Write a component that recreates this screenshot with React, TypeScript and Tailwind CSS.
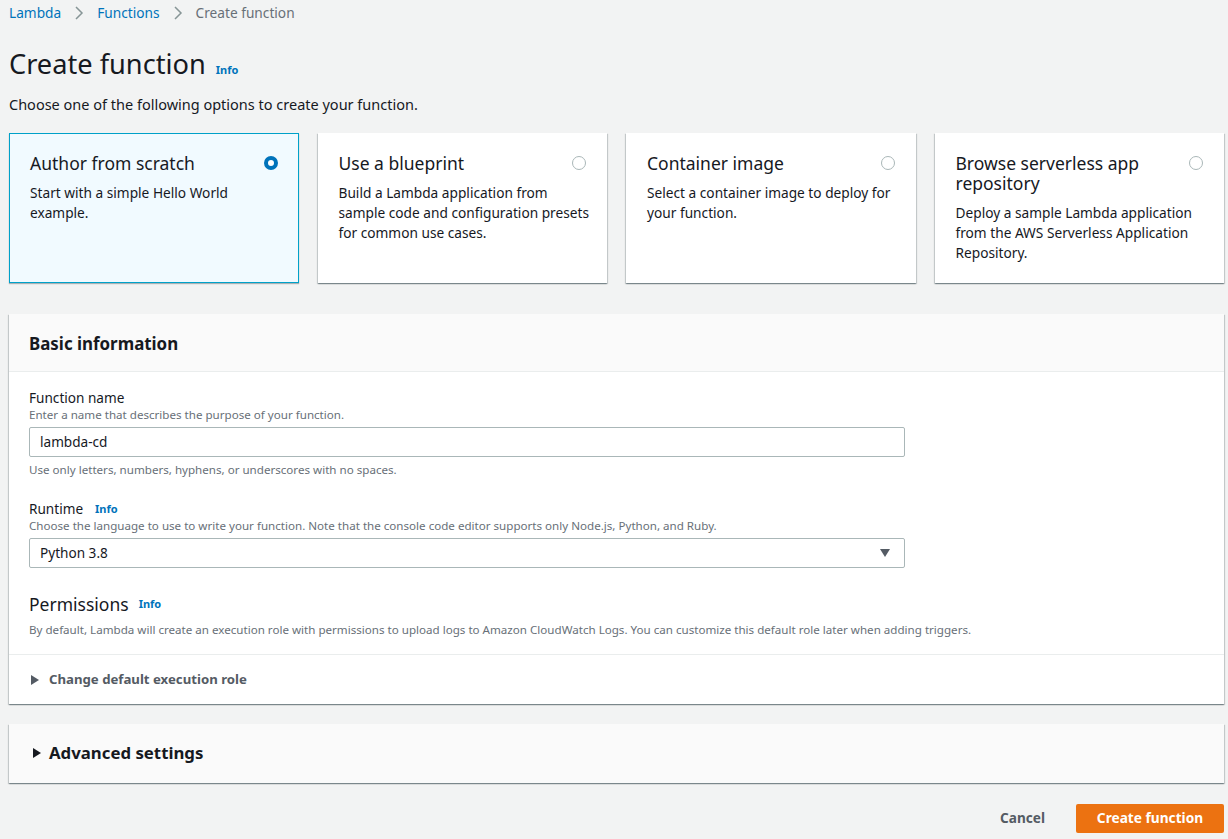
import React from "react";

const font = { fontFamily: '"Noto Sans", "Open Sans", Arial, sans-serif' };

const shadow =
  "shadow-[0_1px_1px_0_rgba(0,28,36,0.3),1px_1px_1px_0_rgba(0,28,36,0.15),-1px_1px_1px_0_rgba(0,28,36,0.15)]";

function Card({ title, desc, selected }: { title: React.ReactNode; desc: string; selected?: boolean }) {
  return (
    <div
      className={
        "flex-1 h-[150px] px-5 pt-[19px] " +
        (selected
          ? "bg-[#f1faff] border border-[#00a1c9] shadow-[0_1px_1px_rgba(0,28,36,0.3)]"
          : "bg-white border border-transparent " + shadow)
      }
    >
      <div className="flex justify-between items-start">
        <div className="text-[17.5px] leading-[20px] text-[#16191f]">{title}</div>
        {selected ? (
          <div className="w-[14px] h-[14px] rounded-full border-[4px] border-[#0073bb] bg-white mt-[3px] shrink-0" />
        ) : (
          <div className="w-[14px] h-[14px] rounded-full border border-[#aab7b8] bg-white mt-[3px] shrink-0" />
        )}
      </div>
      <div className="mt-[10px] mr-[-10px] text-[13.7px] leading-[20px] text-[#16191f]">{desc}</div>
    </div>
  );
}

export default function App() {
  return (
    <div style={font} className="min-h-[839px] bg-[#f2f3f3] text-[#16191f] pl-[9px] pr-[4px]">
      <div className="flex items-center h-[26px] text-[13.7px]">
        <span className="text-[#0073bb]">Lambda</span>
        <svg width="10" height="14" viewBox="0 0 10 14" className="mx-[13px]"><path d="M2 1l6 6-6 6" fill="none" stroke="#879596" strokeWidth="1.5" /></svg>
        <span className="text-[#0073bb]">Functions</span>
        <svg width="10" height="14" viewBox="0 0 10 14" className="mx-[13px]"><path d="M2 1l6 6-6 6" fill="none" stroke="#879596" strokeWidth="1.5" /></svg>
        <span className="text-[#687078]">Create function</span>
      </div>
      <div className="flex items-baseline mt-[20px]">
        <h1 className="text-[27.2px] leading-[36px] text-[#16191f]">Create function</h1>
        <span className="ml-[10px] text-[11px] font-bold text-[#0073bb]">Info</span>
      </div>
      <div className="text-[14.5px] leading-[20px] mt-[12px]">Choose one of the following options to create your function.</div>

      <div className="flex gap-[19px] mt-[19px]">
        <Card title="Author from scratch" desc="Start with a simple Hello World example." selected />
        <Card title="Use a blueprint" desc="Build a Lambda application from sample code and configuration presets for common use cases." />
        <Card title="Container image" desc="Select a container image to deploy for your function." />
        <Card title={<span>Browse serverless app<br />repository</span>} desc="Deploy a sample Lambda application from the AWS Serverless Application Repository." />
      </div>

      <div className={"mt-[31px] bg-white " + shadow}>
        <div className="h-[58px] bg-[#fafafa] border-b border-[#eaeded] flex items-center px-5 pt-[2px]">
          <h2 className="text-[16.9px] font-bold">Basic information</h2>
        </div>
        <div className="px-5 pt-[17px]">
          <div className="text-[13.6px] leading-[18px]">Function name</div>
          <div className="text-[11.6px] leading-[15px] text-[#687078]">Enter a name that describes the purpose of your function.</div>
          <div className="mt-[5px] w-[876px] h-[30px] border border-[#aab7b8] rounded-[2px] flex items-center px-[10px] text-[13.6px]">lambda-cd</div>
          <div className="mt-[5px] text-[11.6px] leading-[16px] text-[#687078]">Use only letters, numbers, hyphens, or underscores with no spaces.</div>

          <div className="mt-[22px] text-[13.6px] leading-[18px] flex items-center">Runtime<span className="ml-[12px] text-[11px] font-bold text-[#0073bb]">Info</span></div>
          <div className="text-[11.6px] leading-[15px] text-[#687078]">Choose the language to use to write your function. Note that the console code editor supports only Node.js, Python, and Ruby.</div>
          <div className="mt-[5px] w-[876px] h-[30px] border border-[#aab7b8] rounded-[2px] flex items-center justify-between pl-[10px] pr-[13px] text-[13.6px]">
            <span>Python 3.8</span>
            <svg width="12" height="10" viewBox="0 0 12 10"><path d="M1 1h10L6 9z" fill="#545b64" /></svg>
          </div>

          <div className="mt-[24px] flex items-center">
            <span className="text-[17.5px] leading-[24px]">Permissions</span>
            <span className="ml-[10px] text-[11px] font-bold text-[#0073bb]">Info</span>
          </div>
          <div className="mt-[6px] text-[11.6px] leading-[16px] text-[#687078] pb-[16px]">By default, Lambda will create an execution role with permissions to upload logs to Amazon CloudWatch Logs. You can customize this default role later when adding triggers.</div>
        </div>
        <div className="border-t border-[#eaeded] h-[50px] flex items-center pl-[21px]">
          <svg width="10" height="12" viewBox="0 0 10 12"><path d="M1 1l8 5-8 5z" fill="#545b64" /></svg>
          <span className="ml-[9px] text-[13.2px] font-bold text-[#545b64]">Change default execution role</span>
        </div>
      </div>

      <div className={"mt-[20px] h-[59px] bg-[#fafafa] flex items-center pl-[23px] pb-[1px] " + shadow}>
        <svg width="10" height="12" viewBox="0 0 10 12"><path d="M1 1l8 5-8 5z" fill="#16191f" /></svg>
        <span className="ml-[7px] text-[16.8px] font-bold">Advanced settings</span>
      </div>

      <div className="flex justify-end items-center mt-[21px] pb-[6px]">
        <span className="text-[13.6px] font-bold text-[#545b64] mr-[31px]">Cancel</span>
        <div className="h-[29px] w-[148px] bg-[#ec7211] text-white text-[13.7px] font-bold flex items-center justify-center rounded-[2px]">Create function</div>
      </div>
    </div>
  );
}
